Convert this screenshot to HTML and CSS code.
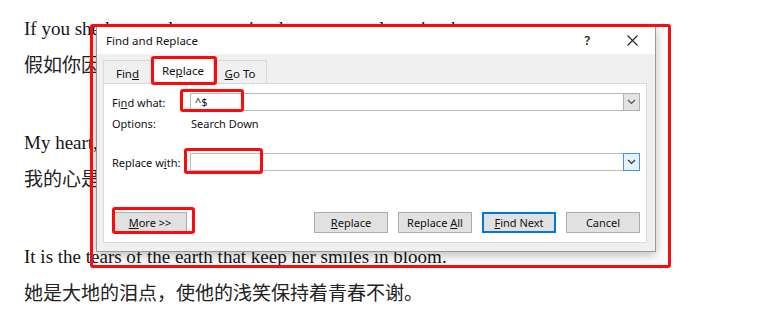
FILE: index.html
```html
<!DOCTYPE html>
<html lang="en">
<head>
<meta charset="utf-8">
<title>Find and Replace</title>
<link rel="stylesheet" href="styles.css">
</head>
<body>
<div class="doc">
  <p class="en">If you shed tears when you miss the sun, you also miss the stars.</p>
  <p class="zh">假如你因错过了太阳而流泪，那么你也将错过群星。</p>
  <p class="gap"></p>
  <p class="en">My heart, the bird of the wilderness, has found its sky in your eyes.</p>
  <p class="zh">我的心是旷野的鸟，在你的眼睛里找到了它的天空。</p>
  <p class="gap"></p>
  <p class="en">It is the tears of the earth that keep her smiles in bloom.</p>
  <p class="zh">她是大地的泪点，使他的浅笑保持着青春不谢。</p>
</div>

<div class="dialog">
  <div class="titlebar">
    <span class="title">Find and Replace</span>
    <span class="help">?</span>
    <svg class="close" width="11" height="11" viewBox="0 0 11 11"><path d="M0.5 0.5 L10.5 10.5 M10.5 0.5 L0.5 10.5" stroke="#222" stroke-width="1.1" fill="none"/></svg>
  </div>
  <div class="body">
    <div class="tabs">
      <div class="tab t-find"><span>Fin<u>d</u></span></div>
      <div class="tab t-rep active"><span>Re<u>p</u>lace</span></div>
      <div class="tab t-go"><span><u>G</u>o To</span></div>
    </div>
    <div class="panel">
      <div class="row">
        <span class="label">Fi<u>n</u>d what:</span>
        <div class="combo">
          <span class="val">^$</span>
          <span class="drop"><svg width="9" height="6" viewBox="0 0 9 6"><path d="M1 1 L4.5 4.5 L8 1" stroke="#555" stroke-width="1.2" fill="none"/></svg></span>
        </div>
      </div>
      <div class="row opt">
        <span class="label">Options:</span>
        <span class="optval">Search Down</span>
      </div>
      <div class="row rep">
        <span class="label">Replace w<u>i</u>th:</span>
        <div class="combo">
          <span class="val"></span>
          <span class="drop focus"><svg width="9" height="6" viewBox="0 0 9 6"><path d="M1 1 L4.5 4.5 L8 1" stroke="#333" stroke-width="1.2" fill="none"/></svg></span>
        </div>
      </div>
      <div class="buttons">
        <span class="btn more"><span><u>M</u>ore &gt;&gt;</span></span>
        <span class="spacer"></span>
        <span class="btn"><span><u>R</u>eplace</span></span>
        <span class="btn"><span>Replace <u>A</u>ll</span></span>
        <span class="btn primary"><span><u>F</u>ind Next</span></span>
        <span class="btn"><span>Cancel</span></span>
      </div>
    </div>
  </div>
</div>

<div class="hl hl-big"></div>
<div class="hl hl-tab"></div>
<div class="hl hl-find"></div>
<div class="hl hl-rep"></div>
<div class="hl hl-more"></div>
</body>
</html>
```

FILE: styles.css
```css
html, body {
  margin: 0;
  padding: 0;
  background: #ffffff;
}

.doc {
  padding: 7px 24px 0 24px;
}

.doc p {
  margin: 0;
  height: 38px;
  line-height: 38px;
  white-space: nowrap;
  box-sizing: border-box;
}

.en {
  font-family: "Liberation Serif", "Times New Roman", serif;
  font-size: 19px;
  color: #151515;
}

.doc p.en {
  padding-top: 6px;
  line-height: 32px;
}

.zh {
  font-family: "Noto Sans CJK SC", sans-serif;
  font-size: 19px;
  color: #222222;
}

/* Dialog */
.dialog {
  position: absolute;
  left: 96px;
  top: 26px;
  width: 560px;
  height: 226px;
  box-sizing: border-box;
  border: 1px solid #9a9a9a;
  background: #f0f0f0;
  box-shadow: 0 3px 10px rgba(0, 0, 0, 0.28);
  font-family: "Noto Sans", "Open Sans", sans-serif;
  font-size: 11px;
  color: #111;
  display: flex;
  flex-direction: column;
}

.titlebar {
  height: 27px;
  background: #ffffff;
  display: flex;
  align-items: center;
  padding-left: 9px;
  padding-right: 17px;
}

.title {
  font-size: 11.5px;
  color: #111;
  flex: 1;
}

.help {
  font-size: 12px;
  font-weight: 600;
  color: #222;
  margin-right: 37px;
}

.close {
  display: block;
}

.body {
  padding: 3px 8px 8px 6px;
  display: flex;
  flex-direction: column;
}

.tabs {
  height: 26px;
  display: flex;
  align-items: flex-end;
}

.tab {
  box-sizing: border-box;
  height: 23px;
  border: 1px solid #d9d9d9;
  border-bottom: none;
  background: #f0f0f0;
  display: flex;
  align-items: center;
  justify-content: center;
  padding-top: 2px;
  color: #111;
  font-size: 11.5px;
}

.t-find { width: 49px; }
.t-rep { width: 62px; }
.t-go { width: 53px; border-left: none; }

.tab.active {
  height: 27px;
  margin-bottom: -1px;
  background: #ffffff;
  position: relative;
  z-index: 1;
  padding-top: 0;
  padding-bottom: 1px;
}

.panel {
  height: 160px;
  box-sizing: border-box;
  border: 1px solid #d9d9d9;
  background: #ffffff;
  padding: 9px 6px 0 8px;
  display: flex;
  flex-direction: column;
}

.row {
  display: flex;
  align-items: center;
  height: 18px;
}

.row.opt {
  margin-top: 4px;
  height: 16px;
}

.row.rep {
  margin-top: 22px;
}

.label {
  width: 78px;
  flex: none;
  color: #111;
}

.optval {
  padding-left: 1px;
  color: #111;
}

.combo {
  flex: 1;
  height: 18px;
  box-sizing: border-box;
  border: 1px solid #b9b9b9;
  display: flex;
  align-items: stretch;
  background: #ffffff;
}

.val {
  flex: 1;
  padding-left: 4px;
  line-height: 16px;
  color: #111;
}

.drop {
  width: 17px;
  margin: -1px -1px -1px 0;
  box-sizing: border-box;
  border: 1px solid #b0b0b0;
  background: #e3e3e3;
  display: flex;
  align-items: center;
  justify-content: center;
}

.drop.focus {
  border: 1px solid #4a90d9;
  background: #e5f1fb;
}

.buttons {
  margin-top: 41px;
  height: 21px;
  display: flex;
}

.btn {
  width: 74px;
  height: 21px;
  box-sizing: border-box;
  border: 1px solid #adadad;
  background: #e1e1e1;
  display: flex;
  align-items: center;
  justify-content: center;
  margin-left: 10px;
  color: #111;
  white-space: nowrap;
}

.btn.more {
  margin-left: 1px;
}

.btn.primary {
  border: 2px solid #0078d7;
}

.spacer {
  flex: 1;
}

/* red annotation boxes */
.hl {
  position: absolute;
  box-sizing: border-box;
  border: 3px solid #ff0a0a;
  border-radius: 3px;
  z-index: 5;
}

.hl-big {
  left: 90px;
  top: 24px;
  width: 581px;
  height: 244px;
}

.hl-tab {
  left: 151px;
  top: 56px;
  width: 66px;
  height: 29px;
}

.hl-find {
  left: 180px;
  top: 89px;
  width: 64px;
  height: 23px;
}

.hl-rep {
  left: 184px;
  top: 148px;
  width: 79px;
  height: 26px;
}

.hl-more {
  left: 112px;
  top: 207px;
  width: 83px;
  height: 27px;
}
```
